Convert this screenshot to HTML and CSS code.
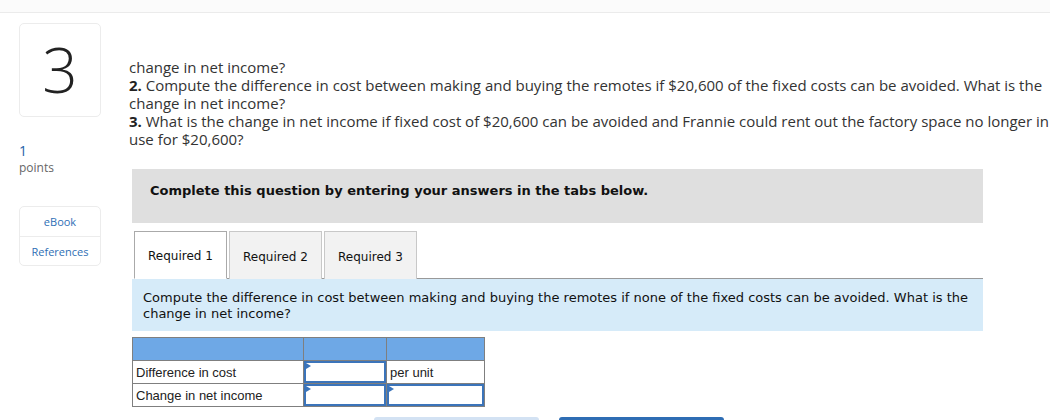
FILE: index.html
```html
<!DOCTYPE html>
<html lang="en">
<head>
    <meta charset="UTF-8">
    <meta name="viewport" content="width=device-width, initial-scale=1.0">
    <title>Question 3</title>
    <link rel="stylesheet" href="styles.css">
</head>
<body>
    <div class="topbar"></div>

    <div class="page">
        <div class="sidebar">
            <div class="question-num">3</div>
            <div class="points">
                <div class="points-value">1</div>
                <div class="points-label">points</div>
            </div>
            <div class="side-links">
                <a class="side-link" href="#">eBook</a>
                <a class="side-link" href="#">References</a>
            </div>
        </div>

        <div class="content">
            <div class="prompt">
                change in net income?<br>
                <b>2.</b> Compute the difference in cost between making and buying the remotes if $20,600 of the fixed costs can be avoided. What is the<br>
                change in net income?<br>
                <b>3.</b> What is the change in net income if fixed cost of $20,600 can be avoided and Frannie could rent out the factory space no longer in<br>
                use for $20,600?
            </div>

            <div class="instructions">Complete this question by entering your answers in the tabs below.</div>

            <div class="tabs">
                <div class="tab active">Required 1</div>
                <div class="tab">Required 2</div>
                <div class="tab">Required 3</div>
            </div>

            <div class="tab-panel">
                Compute the difference in cost between making and buying the remotes if none of the fixed costs can be avoided. What is the change in net income?
            </div>

            <table class="answer-table">
                <tr class="head-row">
                    <td class="col-label"></td>
                    <td class="col-input"></td>
                    <td class="col-unit"></td>
                </tr>
                <tr>
                    <td>Difference in cost</td>
                    <td class="input-cell"><div class="answer-input"></div></td>
                    <td>per unit</td>
                </tr>
                <tr>
                    <td>Change in net income</td>
                    <td class="input-cell"><div class="answer-input"></div></td>
                    <td class="input-cell"><div class="answer-input"></div></td>
                </tr>
            </table>

            <div class="nav-buttons">
                <div class="nav-btn prev"></div>
                <div class="nav-btn next"></div>
            </div>
        </div>
    </div>
</body>
</html>
```

FILE: styles.css
```css
* {
    box-sizing: border-box;
    margin: 0;
    padding: 0;
}

body {
    font-family: "Open Sans", Lato, sans-serif;
    background-color: #fff;
    color: #333;
    overflow: hidden;
}

.topbar {
    height: 13px;
    background-color: #fbfbfb;
    border-bottom: 1px solid #ebebeb;
}

.page {
    display: flex;
    padding: 10px 0 0 19px;
}

.sidebar {
    width: 82px;
    flex-shrink: 0;
}

.question-num {
    height: 94px;
    border: 1px solid #ececec;
    border-radius: 5px;
    display: flex;
    align-items: center;
    justify-content: center;
    font-family: "Open Sans", sans-serif;
    font-size: 62px;
    font-weight: 300;
    color: #222;
    padding-bottom: 2px;
}

.points {
    margin-top: 25px;
}

.points-value {
    font-size: 14px;
    line-height: 18px;
    color: #1d5fa8;
}

.points-label {
    font-size: 12px;
    line-height: 16px;
    color: #666;
}

.side-links {
    margin-top: 30px;
    border: 1px solid #ececec;
    border-radius: 5px;
    display: flex;
    flex-direction: column;
}

.side-link {
    height: 29px;
    display: flex;
    align-items: center;
    justify-content: center;
    font-size: 11px;
    color: #2f6fb5;
    text-decoration: none;
}

.side-link + .side-link {
    border-top: 1px solid #ececec;
}

.content {
    padding-left: 28px;
    flex: 1;
    min-width: 0;
}

.prompt {
    margin-top: 35px;
    font-size: 15px;
    line-height: 18px;
    color: #333;
    white-space: nowrap;
}

.prompt b {
    color: #222;
}

.instructions {
    margin-top: 21px;
    margin-left: 3px;
    width: 851px;
    height: 54px;
    background-color: #dfdfdf;
    padding: 14px 18px;
    font-family: "DejaVu Sans", Verdana, sans-serif;
    font-size: 13px;
    font-weight: bold;
    color: #111;
}

.tabs {
    display: flex;
    gap: 2px;
    margin-top: 8px;
    margin-left: 5px;
    width: 849px;
    border-bottom: 1px solid #999;
}

.tab {
    width: 93px;
    height: 48px;
    display: flex;
    align-items: center;
    justify-content: center;
    border: 1px solid #c8c8c8;
    border-bottom: none;
    background-color: #f2f2f2;
    font-family: "DejaVu Sans", Verdana, sans-serif;
    font-size: 12px;
    color: #111;
    margin-bottom: -1px;
    padding-top: 2px;
}

.tab.active {
    background-color: #fff;
    border-color: #aaa;
    border-bottom: 1px solid #fff;
}

.tab-panel {
    margin-left: 3px;
    width: 851px;
    background-color: #d6ebf9;
    padding: 11px 11px 9px 11px;
    font-family: "DejaVu Sans", Verdana, sans-serif;
    font-size: 13px;
    line-height: 16px;
    color: #111;
}

.answer-table {
    margin-top: 6px;
    margin-left: 3px;
    border-collapse: collapse;
    font-family: "Liberation Sans", Arial, sans-serif;
    font-size: 13px;
    line-height: 15px;
    color: #222;
}

.answer-table td {
    border: 1px solid #7f7f7f;
    height: 23px;
    padding: 0 3px;
}

.head-row td {
    background-color: #6ea8e6;
}

.col-label {
    width: 171px;
}

.col-input {
    width: 83px;
}

.col-unit {
    width: 98px;
}

.answer-table .input-cell {
    padding: 0;
}

.answer-input {
    position: relative;
    height: 22px;
    border: 2px solid #3b74ba;
    background-color: #fff;
}

.answer-input::before {
    content: "";
    position: absolute;
    top: 0;
    left: 0;
    border-left: 5px solid #3b74ba;
    border-top: 3px solid transparent;
    border-bottom: 3px solid transparent;
}

.nav-buttons {
    display: flex;
    gap: 20px;
    margin-top: 10px;
    margin-left: 245px;
}

.nav-btn {
    width: 165px;
    height: 30px;
    border-radius: 3px;
}

.nav-btn.prev {
    background-color: #d3e2f3;
}

.nav-btn.next {
    background-color: #2e6db4;
}
```
